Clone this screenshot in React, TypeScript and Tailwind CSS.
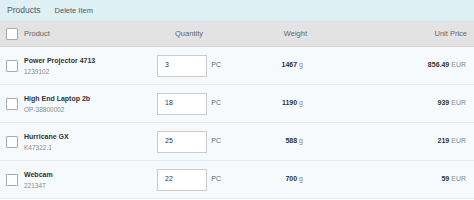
import React from "react";

const rows = [
  { name: "Power Projector 4713", id: "1239102", qty: "3", weight: "1467", price: "856.49" },
  { name: "High End Laptop 2b", id: "OP-38800002", qty: "18", weight: "1190", price: "939" },
  { name: "Hurricane GX", id: "K47322.1", qty: "25", weight: "588", price: "219" },
  { name: "Webcam", id: "22134T", qty: "22", weight: "700", price: "59" },
];

function Box() {
  return <div className="w-[12px] h-[12px] border border-[#a9a9a9] bg-white rounded-[1px] shrink-0" />;
}

export default function App() {
  return (
    <div className="w-[474px] h-[200px] overflow-hidden bg-white text-[#333] font-['Liberation_Sans',Arial,sans-serif]">
      <div className="w-[474px]">
        <div className="h-[22px] bg-[#dff0f5] border-b border-[#cfe3ea] flex items-center pl-[7px] gap-[14px]">
          <span className="text-[8.5px] text-[#4a5a63]">Products</span>
          <span className="text-[7.5px] text-[#4a5a63]">Delete Item</span>
        </div>
        <div className="h-[25px] bg-[#e3e3e3] border-b border-[#d6d6d6] flex items-center text-[7.5px] text-[#666]">
          <div className="w-[157px] flex items-center pl-[6px] gap-[6px]">
            <Box />
            <span>Product</span>
          </div>
          <div className="w-[64px] text-center">Quantity</div>
          <div className="w-[86px] text-right">Weight</div>
          <div className="flex-1 text-right pr-[7px]">Unit Price</div>
        </div>
        {rows.map((r) => (
          <div key={r.name} className="h-[38px] bg-[#f7fafc] border-b border-[#e4eaee] flex items-center">
            <div className="w-[157px] flex items-center pl-[6px] gap-[6px]">
              <Box />
              <div className="flex flex-col gap-[3px] pt-[1px]">
                <span className="text-[7px] leading-[8px] font-bold text-[#333]">{r.name}</span>
                <span className="text-[6.5px] leading-[8px] text-[#8a8a8a]">{r.id}</span>
              </div>
            </div>
            <div className="w-[64px] flex items-center gap-[4px]">
              <div className="w-[51px] h-[22px] bg-white border border-[#cccccc] flex items-center pl-[7px] text-[7px] text-[#333]">{r.qty}</div>
              <span className="text-[7px] text-[#666]">PC</span>
            </div>
            <div className="w-[82px] text-right text-[7px]">
              <span className="font-bold text-[#333]">{r.weight}</span>
              <span className="text-[#888]"> g</span>
            </div>
            <div className="flex-1 text-right pr-[8px] text-[7px]">
              <span className="font-bold text-[#333]">{r.price}</span>
              <span className="text-[#888]"> EUR</span>
            </div>
          </div>
        ))}
      </div>
    </div>
  );
}
